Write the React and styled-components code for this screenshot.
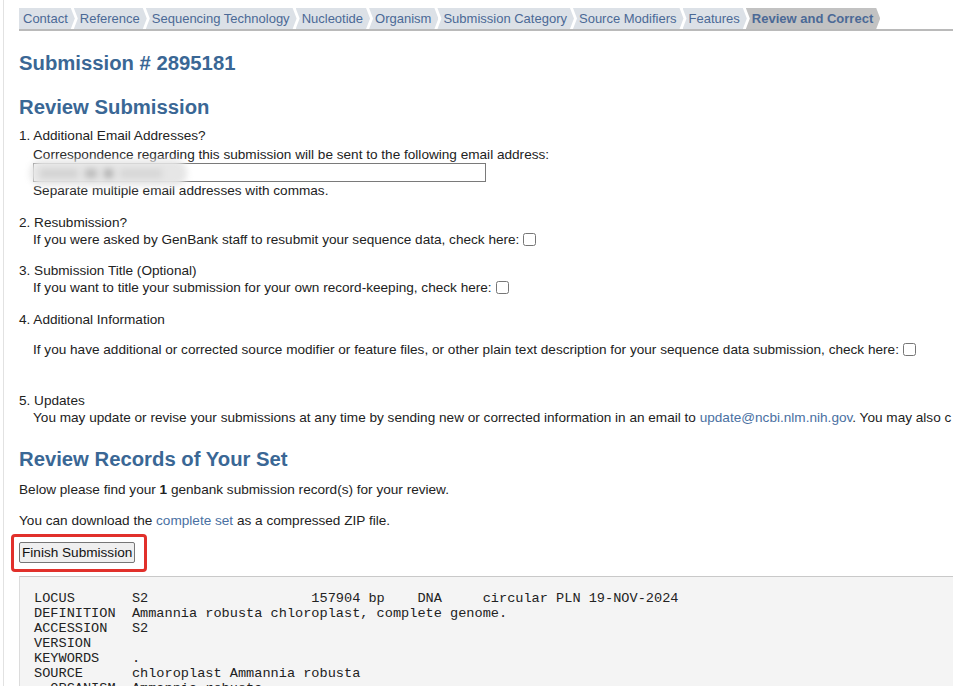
import React from "react"
import styled, { createGlobalStyle } from "styled-components"

const GlobalStyle = createGlobalStyle`
  html, body {
    margin: 0;
    padding: 0;
    background: #fff;
    overflow: hidden;
  }
  body {
    font-family: "Liberation Sans", Arial, sans-serif;
    font-size: 13.6px;
    color: #222;
  }
`

const Page = styled.div`
  width: 1250px;
  height: 686px;
  overflow: hidden;
  margin-left: 3px;
  border-left: 1px solid #e2e2e2;
  padding: 8px 0 0 15px;
  box-sizing: border-box;
`

const TabBar = styled.div`
  display: flex;
  border-bottom: 2px solid #bababa;
`

const Tab = styled.a`
  display: block;
  height: 21px;
  line-height: 21px;
  font-size: 13px;
  text-decoration: none;
  white-space: nowrap;
  color: #4b6996;
  background: ${(p) => (p.$active ? "#c2c2c2" : "#dce1e7")};
  font-weight: ${(p) => (p.$active ? "bold" : "normal")};
  padding: ${(p) => (p.$first ? "0 7px 0 4px" : "0 7px 0 6px")};
  margin-left: ${(p) => (p.$first ? "0" : "-1px")};
  clip-path: ${(p) =>
    p.$first
      ? "polygon(0 0, calc(100% - 4px) 0, 100% 50%, calc(100% - 4px) 100%, 0 100%)"
      : "polygon(0 0, calc(100% - 4px) 0, 100% 50%, calc(100% - 4px) 100%, 0 100%, 4px 50%)"};
`

const Heading = styled.h2`
  margin: ${(p) => p.$mt || "22px"} 0 0;
  font-size: 20.3px;
  line-height: 23px;
  font-weight: bold;
  color: #3a6795;
`

const List = styled.ol`
  margin: 8px 0 0;
  padding: 0;
  list-style: none;
`

const Item = styled.li`
  margin-top: ${(p) => (p.$first ? "0" : "14.5px")};
  line-height: 17px;
`

const Desc = styled.div`
  padding-left: 14px;
  margin-top: ${(p) => p.$mt || "0"};
  padding-bottom: ${(p) => p.$pb || "0"};
  white-space: nowrap;
`

const EmailWrap = styled.div`
  position: relative;
  margin-left: 14px;
  width: 453px;
  height: 19px;
`

const EmailInput = styled.input`
  box-sizing: border-box;
  width: 453px;
  height: 19px;
  margin: 0;
  border: 1px solid #7a7a7a;
  padding: 1px 2px;
  font-size: 13px;
  font-family: "Liberation Sans", Arial, sans-serif;
`

const Redacted = styled.div`
  position: absolute;
  left: -3px;
  top: -3px;
  width: 157px;
  height: 26px;
  display: flex;
  align-items: center;
  gap: 7px;
  padding: 0 10px;
  box-sizing: border-box;
  background: #e6e6e6;
  border-radius: 12px;
  filter: blur(3px);
`

const Blot = styled.span`
  display: block;
  height: 9px;
  width: ${(p) => p.$w}px;
  background: ${(p) => p.$c};
`

const Check = styled.input.attrs({ type: "checkbox" })`
  width: 13px;
  height: 13px;
  margin: 0 0 0 4px;
  vertical-align: -2px;
`

const Link = styled.a`
  color: #4a70a2;
  text-decoration: none;
`

const Para = styled.p`
  margin: ${(p) => p.$mt || "0"} 0 0;
  line-height: 17px;
  white-space: nowrap;
`

const Highlight = styled.div`
  display: inline-block;
  margin: 5.5px 0 0 -8px;
  padding: 5px 9px 6px 5px;
  border: 3px solid #e1302b;
  border-radius: 4px;
`

const Button = styled.button`
  display: block;
  height: 21px;
  padding: 0 2px;
  font-size: 13.6px;
  font-family: "Liberation Sans", Arial, sans-serif;
  color: #111;
  background: #efefef;
  border: 1px solid #767676;
  border-radius: 2px;
`

const Record = styled.pre`
  margin: 4px 0 0;
  padding: 14px 0 0 14px;
  height: 200px;
  background: #f4f4f4;
  border-top: 1px solid #c9c9c9;
  border-left: 1px solid #dcdcdc;
  font-family: "Liberation Mono", "Courier New", monospace;
  font-size: 13.6px;
  line-height: 15px;
  color: #222;
`

const tabs = [
  "Contact",
  "Reference",
  "Sequencing Technology",
  "Nucleotide",
  "Organism",
  "Submission Category",
  "Source Modifiers",
  "Features",
  "Review and Correct",
]

const record = `LOCUS       S2                    157904 bp    DNA     circular PLN 19-NOV-2024
DEFINITION  Ammannia robusta chloroplast, complete genome.
ACCESSION   S2
VERSION
KEYWORDS    .
SOURCE      chloroplast Ammannia robusta
  ORGANISM  Ammannia robusta`

export default function App() {
  return (
    <>
      <GlobalStyle />
      <Page>
        <TabBar>
          {tabs.map((t, i) => (
            <Tab key={t} href="#" $first={i === 0} $active={i === tabs.length - 1}>
              {t}
            </Tab>
          ))}
        </TabBar>

        <Heading $mt="21px">Submission # 2895181</Heading>
        <Heading $mt="21px">Review Submission</Heading>

        <List>
          <Item $first>
            1. Additional Email Addresses?
            <Desc $mt="2px">Correspondence regarding this submission will be sent to the following email address:</Desc>
            <EmailWrap>
              <EmailInput type="text" />
              <Redacted>
                <Blot $w={38} $c="#d2d2d2" />
                <Blot $w={12} $c="#bcbcbc" />
                <Blot $w={9} $c="#b0b0b0" />
                <Blot $w={42} $c="#d6d6d6" />
              </Redacted>
            </EmailWrap>
            <Desc>Separate multiple email addresses with commas.</Desc>
          </Item>
          <Item>
            2. Resubmission?
            <Desc>
              If you were asked by GenBank staff to resubmit your sequence data, check here:
              <Check />
            </Desc>
          </Item>
          <Item>
            3. Submission Title (Optional)
            <Desc>
              If you want to title your submission for your own record-keeping, check here:
              <Check />
            </Desc>
          </Item>
          <Item>
            4. Additional Information
            <Desc $mt="13px" $pb="19.5px">
              If you have additional or corrected source modifier or feature files, or other plain text description for
              your sequence data submission, check here:
              <Check />
            </Desc>
          </Item>
          <Item>
            5. Updates
            <Desc>
              You may update or revise your submissions at any time by sending new or corrected information in an email
              to <Link href="#">update@ncbi.nlm.nih.gov</Link>. You may also c
            </Desc>
          </Item>
        </List>

        <Heading>Review Records of Your Set</Heading>
        <Para $mt="10px">
          Below please find your <b>1</b> genbank submission record(s) for your review.
        </Para>
        <Para $mt="14px">
          You can download the <Link href="#">complete set</Link> as a compressed ZIP file.
        </Para>
        <div>
          <Highlight>
            <Button>Finish Submission</Button>
          </Highlight>
        </div>
        <Record>{record}</Record>
      </Page>
    </>
  )
}
